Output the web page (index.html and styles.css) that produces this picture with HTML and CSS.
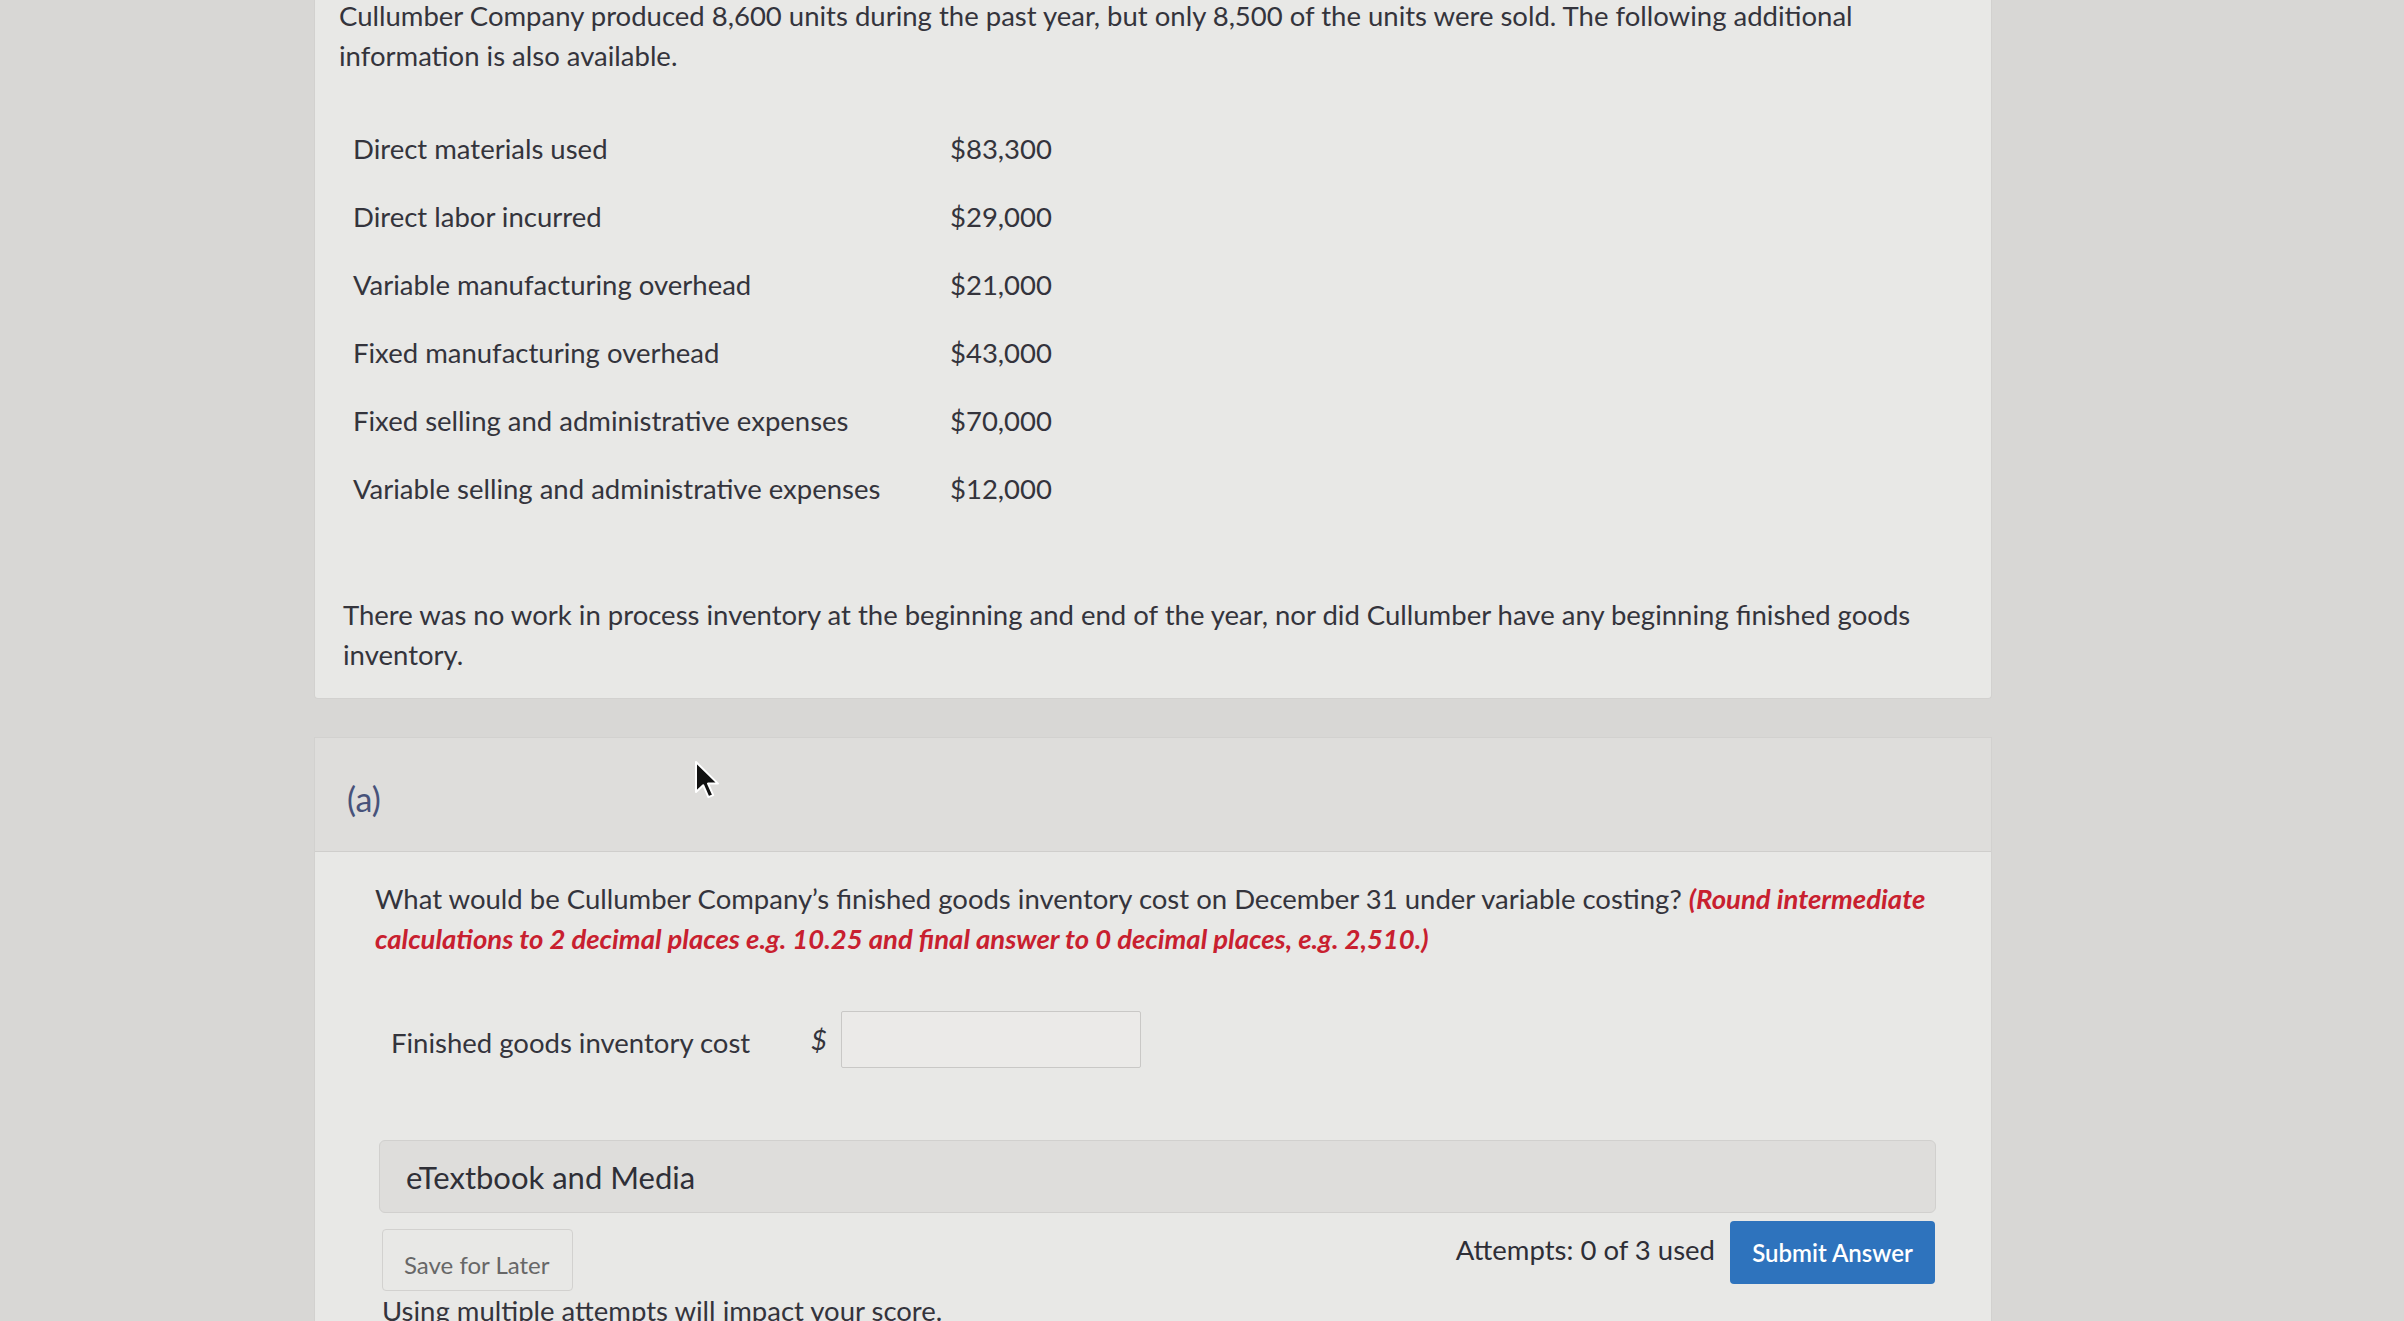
FILE: index.html
```html
<!DOCTYPE html>
<html lang="en">
<head>
<meta charset="utf-8">
<title>Cullumber Company</title>
<link rel="stylesheet" href="styles.css">
</head>
<body>
<main class="page">
  <section class="card">
    <p class="intro">Cullumber Company produced 8,600 units during the past year, but only 8,500 of the units were sold. The following additional information is also available.</p>
    <div class="data">
      <div class="label">Direct materials used</div><div class="value">$83,300</div>
      <div class="label">Direct labor incurred</div><div class="value">$29,000</div>
      <div class="label">Variable manufacturing overhead</div><div class="value">$21,000</div>
      <div class="label">Fixed manufacturing overhead</div><div class="value">$43,000</div>
      <div class="label">Fixed selling and administrative expenses</div><div class="value">$70,000</div>
      <div class="label">Variable selling and administrative expenses</div><div class="value">$12,000</div>
    </div>
    <p class="note">There was no work in process inventory at the beginning and end of the year, nor did Cullumber have any beginning finished goods inventory.</p>
  </section>

  <section class="part">
    <header class="part-head">(a)</header>
    <div class="part-body">
      <p class="question">What would be Cullumber Company’s finished goods inventory cost on December 31 under variable costing? <em class="hint">(Round intermediate calculations to 2 decimal places e.g. 10.25 and final answer to 0 decimal places, e.g. 2,510.)</em></p>
      <div class="answer-row">
        <span class="answer-label">Finished goods inventory cost</span>
        <span class="currency">$</span>
        <input class="answer-input" type="text" aria-label="Finished goods inventory cost">
      </div>
      <div class="media">eTextbook and Media</div>
      <div class="actions">
        <div class="left-actions">
          <button class="save" type="button">Save for Later</button>
          <p class="warning">Using multiple attempts will impact your score.</p>
        </div>
        <div class="right-actions">
          <span class="attempts">Attempts: 0 of 3 used</span>
          <button class="submit" type="button">Submit Answer</button>
        </div>
      </div>
    </div>
  </section>
</main>
<svg class="cursor" width="26" height="40" viewBox="0 0 13 20" aria-hidden="true">
  <path d="M1 1 L1 16 L4.6 12.6 L7.2 18.6 L9.6 17.6 L7 11.8 L12 11.8 Z" fill="#111" stroke="#fff" stroke-width="1" stroke-linejoin="round"/>
</svg>
</body>
</html>
```

FILE: styles.css
```css
* { box-sizing: border-box; }

html, body {
  margin: 0;
  padding: 0;
}

body {
  background: #d8d7d5;
  font-family: Lato, "Open Sans", "Liberation Sans", sans-serif;
  color: #34343c;
  font-size: 27.5px;
  line-height: 40px;
  height: 1321px;
  overflow: hidden;
  position: relative;
}

.page {
  margin-left: 314px;
  width: 1678px;
}

.card {
  background: #e8e8e6;
  border: 1px solid #d2d1cf;
  border-top: none;
  border-radius: 0 0 4px 4px;
  padding: 0 38px 23px 24px;
}

.intro {
  margin: -4px 0 0;
}

.data {
  margin: 39px 0 0 14px;
  display: grid;
  grid-template-columns: 597px auto;
  grid-auto-rows: 68px;
  align-items: center;
}

.note {
  margin: 72px 0 0 4px;
}

.part {
  margin-top: 38px;
  background: #e8e8e6;
  border: 1px solid #d2d1cf;
  border-bottom: none;
}

.part-head {
  height: 114px;
  background: #dedddb;
  border-bottom: 1px solid #cfcecc;
  display: flex;
  align-items: center;
  padding: 8px 0 0 32px;
  font-size: 34px;
  color: #47527a;
}

.part-body {
  padding: 27px 55px 0 60px;
}

.question {
  margin: 0;
}

.hint {
  color: #c8202f;
  font-weight: 700;
  font-style: italic;
}

.answer-row {
  margin: 52px 0 0 16px;
  display: flex;
  align-items: center;
}

.answer-label {
  width: 420px;
  padding-top: 6px;
}

.currency {
  width: 30px;
  font-style: italic;
}

.answer-input {
  width: 300px;
  height: 57px;
  background: #ebeae8;
  border: 1px solid #c9c8c6;
  border-radius: 2px;
  font: inherit;
}

.media {
  margin: 72px 0 0 4px;
  height: 73px;
  background: #dedddb;
  border: 1px solid #d1d0ce;
  border-radius: 6px;
  display: flex;
  align-items: center;
  padding-left: 26px;
  font-size: 31px;
  color: #2f2f37;
}

.actions {
  margin-top: 8px;
  display: flex;
  justify-content: space-between;
  align-items: flex-start;
}

.left-actions {
  padding-left: 7px;
}

.save {
  margin-top: 8px;
  width: 191px;
  height: 62px;
  background: #e8e8e6;
  border: 1px solid #d2d1cf;
  border-radius: 4px;
  font-family: inherit;
  font-size: 24px;
  color: #676767;
  text-align: left;
  padding: 8px 0 0 21px;
}

.warning {
  margin: 0;
  color: #34343c;
}

.right-actions {
  display: flex;
  align-items: center;
  gap: 15px;
  padding-right: 1px;
}

.attempts {
  font-size: 27.5px;
  color: #2e2e36;
  padding-bottom: 6px;
}

.submit {
  width: 205px;
  height: 63px;
  background: #2e73bd;
  color: #fff;
  border: none;
  border-radius: 4px;
  font-family: inherit;
  font-size: 24px;
  font-weight: 600;
}

.cursor {
  position: absolute;
  left: 694px;
  top: 760px;
}
```
